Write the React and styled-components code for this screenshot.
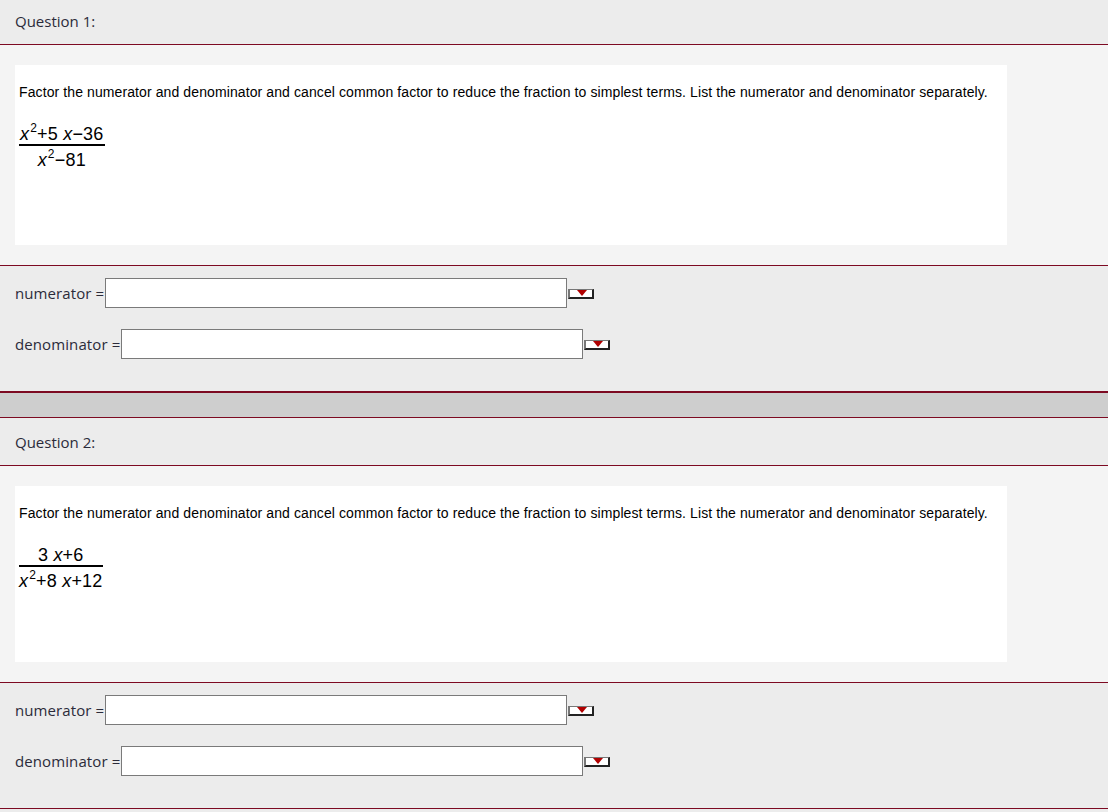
import React from "react";
import styled, { createGlobalStyle } from "styled-components";

const GlobalStyle = createGlobalStyle`
  html, body {
    margin: 0;
    padding: 0;
    background: #ececec;
  }
  body {
    font-family: "Open Sans", "Liberation Sans", sans-serif;
    color: #333;
  }
`;

const Page = styled.div`
  width: 1108px;
`;

const Header = styled.div`
  background: #ececec;
  height: ${(p) => p.$height}px;
  box-sizing: border-box;
  padding: ${(p) => p.$top}px 15px 0;
  font-size: 15px;
  line-height: 20px;
  color: #2b2b3a;
  border-bottom: 1px solid #7d0a22;
`;

const Content = styled.div`
  background: #f4f4f4;
  padding: 20px 100px 20px 15px;
  border-bottom: 1px solid #7d0a22;
`;

const Problem = styled.div`
  background: #fff;
  width: 992px;
  height: ${(p) => p.$height}px;
  box-sizing: border-box;
  padding: 19px 4px 0;
  font-family: "Liberation Sans", Arial, sans-serif;
  color: #000;
`;

const Prompt = styled.p`
  margin: 0;
  font-size: 14px;
  line-height: 16px;
  letter-spacing: 0.1px;
`;

const Fraction = styled.div`
  display: inline-flex;
  flex-direction: column;
  align-items: center;
  margin-top: 26px;
  font-size: 18px;
  line-height: 17px;
  letter-spacing: 0.2px;
`;

const Numer = styled.span`
  padding: 0 1px 1px;
  border-bottom: 2px solid #000;
  align-self: stretch;
  text-align: center;
  white-space: nowrap;
`;

const Denom = styled.span`
  padding-top: 6px;
  white-space: nowrap;
`;

const Var = styled.i`
  font-style: italic;
`;

const Sup = styled.sup`
  font-size: 12px;
  line-height: 0;
  vertical-align: 8px;
  margin-left: 1px;
`;

const Answers = styled.div`
  background: #ececec;
  padding: 12px 15px 32px;
  display: flex;
  flex-direction: column;
  gap: 21px;
  border-bottom: 1px solid #7d0a22;
`;

const Row = styled.div`
  display: flex;
  align-items: center;
`;

const Label = styled.label`
  font-size: 15px;
  letter-spacing: 0.1px;
  margin-right: 1px;
  color: #2b2b3a;
  white-space: nowrap;
`;

const Field = styled.input`
  width: 462px;
  height: 30px;
  box-sizing: border-box;
  margin: 0;
  border: 1px solid #7a7a7a;
  background: #fff;
  padding: 0 4px;
  font-size: 14px;
`;

const Picker = styled.span`
  position: relative;
  display: inline-block;
  width: 26px;
  height: 10px;
  box-sizing: border-box;
  margin-left: 1px;
  margin-top: 2px;
  background: #fff;
  border-top: 1px solid #777;
  border-left: 2px solid #777;
  border-right: 2px solid #222;
  border-bottom: 2px solid #222;

  &::after {
    content: "";
    position: absolute;
    left: 7px;
    top: 0;
    border-left: 5px solid transparent;
    border-right: 5px solid transparent;
    border-top: 6px solid #b00000;
  }
`;

const Band = styled.div`
  height: 24px;
  background: #cecece;
  border-top: 1px solid #7d0a22;
  border-bottom: 1px solid #7d0a22;
`;

const questions = [
  {
    num: (
      <>
        <Var>x</Var>
        <Sup>2</Sup>+5 <Var>x</Var>−36
      </>
    ),
    den: (
      <>
        <Var>x</Var>
        <Sup>2</Sup>−81
      </>
    ),
    head: { height: 45, top: 11 },
    box: 180,
  },
  {
    num: (
      <>
        3 <Var>x</Var>+6
      </>
    ),
    den: (
      <>
        <Var>x</Var>
        <Sup>2</Sup>+8 <Var>x</Var>+12
      </>
    ),
    head: { height: 48, top: 14 },
    box: 176,
  },
];

function Question({ index, q }) {
  return (
    <section>
      <Header $height={q.head.height} $top={q.head.top}>
        Question {index}:
      </Header>
      <Content>
        <Problem $height={q.box}>
          <Prompt>
            Factor the numerator and denominator and cancel common factor to reduce the
            fraction to simplest terms. List the numerator and denominator separately.
          </Prompt>
          <Fraction>
            <Numer>{q.num}</Numer>
            <Denom>{q.den}</Denom>
          </Fraction>
        </Problem>
      </Content>
      <Answers>
        <Row>
          <Label>numerator =</Label>
          <Field type="text" />
          <Picker />
        </Row>
        <Row>
          <Label>denominator =</Label>
          <Field type="text" />
          <Picker />
        </Row>
      </Answers>
    </section>
  );
}

export default function App() {
  return (
    <Page>
      <GlobalStyle />
      <Question index={1} q={questions[0]} />
      <Band />
      <Question index={2} q={questions[1]} />
    </Page>
  );
}
